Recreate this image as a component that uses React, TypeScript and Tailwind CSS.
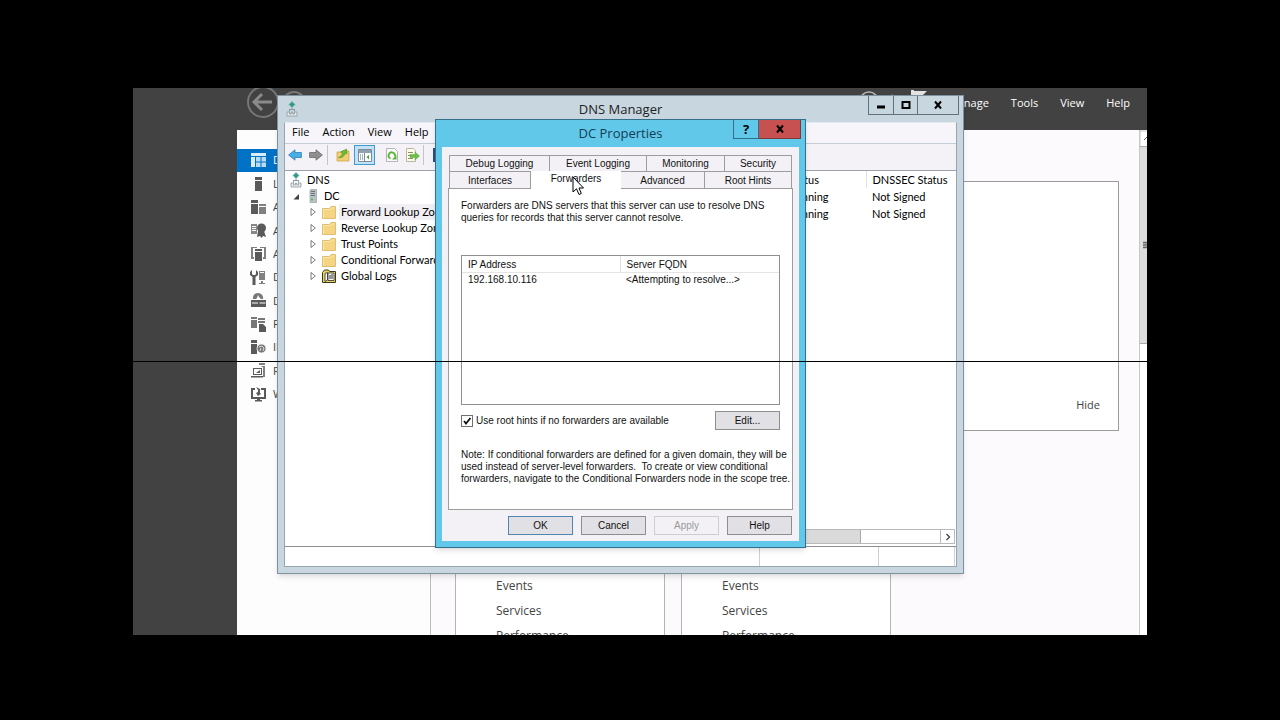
import type { ReactNode } from 'react';

const sidebar = [
  { icon: 'dashboard', label: 'Dashboard' },
  { icon: 'server', label: 'Local Server' },
  { icon: 'servers', label: 'All Servers' },
  { icon: 'cert', label: 'AD CS' },
  { icon: 'directory', label: 'AD DS' },
  { icon: 'dhcp', label: 'DHCP' },
  { icon: 'dns', label: 'DNS' },
  { icon: 'files', label: 'File and Storage Services' },
  { icon: 'iis', label: 'IIS' },
  { icon: 'remote', label: 'Remote Access' },
  { icon: 'wsus', label: 'WSUS' }
];

const tiles = ['Events', 'Services', 'Performance'];

const zones = ['Forward Lookup Zones', 'Reverse Lookup Zones', 'Trust Points', 'Conditional Forwarders'];

const tabsBack = [
  { label: 'Debug Logging', width: 'w-[100px]' },
  { label: 'Event Logging', width: 'w-[97px]' },
  { label: 'Monitoring', width: 'w-[78px]' },
  { label: 'Security', width: 'flex-1' }
];

const tabsFront = [
  { label: 'Interfaces', width: 'w-[82px]' },
  { label: 'Forwarders', width: 'w-[90px]' },
  { label: 'Advanced', width: 'w-[84px]' },
  { label: 'Root Hints', width: 'flex-1' }
];

const glyphs: Record<string, ReactNode> = {
  dashboard: (
    <g fill="#d8ecfa">
      <path d="M1 1h15v3H1zM1 5h4v10H1z" />
      <path d="M6 5h4.500v4.500H6zM11.500 5H16v4.500h-4.500zM6 10.500h4.500V15H6zM11.500 10.500H16V15h-4.500z" opacity=".85" />
    </g>
  ),
  server: <path d="M5 1h7v3H5zM5 5h7v10H5z" />,
  servers: (
    <>
      <path d="M1 1h7v3H1zM1 5h7v10H1z" />
      <path d="M9 5h7v2H9zM9 8h7v7H9z" fill="#808080" />
    </>
  ),
  cert: (
    <>
      <path d="M1 2h6v10H1zM2 4v1h4V4zM2 6v1h4V6zM2 8v1h4V8z" fill="#888" fillRule="evenodd" />
      <path d="M8 9h6l2 6-3-1-1.500 2L10 14l-3 1z" />
      <circle cx="11.500" cy="6" r="4.500" />
    </>
  ),
  directory: (
    <>
      <path d="M5 3h7v2H5zM5 6h7v9H5z" />
      <path d="M1 1h6v1H3v9h1v2H1zM10 1h6v12h-3v-2h1V2h-4z" fill="#808080" />
    </>
  ),
  dhcp: (
    <>
      <path d="M2 1v4l1 1h2l1-1V1l2 2v3L5.500 8v8h-3V8L0 6V3z" />
      <path d="M9 2h6v9H9zM10 3v1h4V3zM11 12h2v2h2v1H9v-1h2z" fill="#808080" fillRule="evenodd" />
    </>
  ),
  dns: (
    <>
      <path d="M8 1a5 5 0 0 1 5 6h-2L9 5 8 3 7 6l-1 1H3a5 5 0 0 1 5-6z" fill="#777" />
      <path d="M1 8h15v7H1zM2 11.500h6v-1H2zM9.500 11.500h6v-1h-6z" fillRule="evenodd" />
    </>
  ),
  files: (
    <>
      <path d="M1 1h6v2H1zM1 4h6v8H1zM8 2h7v2H8zM8 5h7v2H8z" fill="#777" />
      <path d="M9 8h4l3 3v5H9z" />
    </>
  ),
  iis: (
    <>
      <path d="M1 1h6v3H1zM1 5h6v10H1z" />
      <circle cx="11.500" cy="9.500" r="4.500" fill="#777" stroke="#fdfdfd" strokeWidth=".8" />
      <path d="M9 8l3-1 2 2-1 3M10 12l1-3" fill="none" stroke="#ddd" />
    </>
  ),
  remote: (
    <>
      <path d="M9 1h6v2H9zM12 4h3v11h-2V5h-2z" fill="#808080" />
      <path d="M3 6h9v7H3zM4 7v5h7V7zM6 11l4-3v3zM1 14h12v1.500H1z" fillRule="evenodd" />
    </>
  ),
  wsus: (
    <>
      <path d="M1 2h4v2H3v7h11V4h-3V2h5v11h-6v1h2v1.500H5V14h2v-1H1z" />
      <path d="M6 1l4 2v4l1 1-3 2-2-3 2-1V4z" />
    </>
  )
};

function NavIcon({ name }: { name: string }) {
  return (
    <svg viewBox="0 0 17 17" className="size-[17px] shrink-0" fill="#5a5a5a" aria-hidden="true">
      {glyphs[name]}
    </svg>
  );
}

function DnsIcon() {
  return (
    <svg viewBox="0 0 12 16" className="h-4 w-3 shrink-0" aria-hidden="true">
      <path d="M6 .5L9 3.500 6 6.500 3 3.500z" fill="#2f9a86" stroke="#6fb5a6" strokeWidth=".6" />
      <path d="M6 6.500v2M3.500 8.500h5M3.500 8v2.500M8.500 8v2.500" stroke="#8b999f" fill="none" />
      <path d="M1 15v-4h2.500v2h1.800v-2h1.500v2h1.700v-2H11v4z" fill="#e6ebed" stroke="#8c989e" strokeWidth=".8" />
    </svg>
  );
}

function ServerIcon() {
  return (
    <svg viewBox="0 0 8 14" className="h-3.5 w-2 shrink-0" aria-hidden="true">
      <path d="M1 1l1-.5h5.500v13L1 13.500z" fill="#b9c3c6" stroke="#8b9599" strokeWidth=".6" />
      <path d="M2 2.500h4M2 4.500h4M2 6.500h4" stroke="#65737a" />
      <path d="M2 10.500h2" stroke="#58b04a" strokeWidth="1.500" />
    </svg>
  );
}

function FolderIcon() {
  return (
    <svg viewBox="0 0 14 13" className="h-[13px] w-3.5 shrink-0" aria-hidden="true">
      <path d="M.5 12.500v-10h7l1.500-2h4.500v12z" fill="#f3d584" stroke="#d9b35c" strokeWidth=".8" />
      <path d="M1.500 11.500v-8h7l1-1.500h3" fill="none" stroke="#fae7ae" />
    </svg>
  );
}

function LogsIcon() {
  return (
    <svg viewBox="0 0 14 14" className="size-3.5 shrink-0" aria-hidden="true">
      <path d="M.5 3.500l2-2.500h4l1 1.500h6v11H.5z" fill="#e9d75c" stroke="#3c3a1c" />
      <path d="M3 4.500l2.500-1v7.500L3 12.500zM6 4h6v7.500H6z" fill="#fff" stroke="#2b2b2b" strokeWidth=".8" />
      <path d="M8 6v4M10 5v5" stroke="#2b2b2b" />
    </svg>
  );
}

function Expander({ open }: { open?: boolean }) {
  return (
    <svg viewBox="0 0 6 8" className="h-2 w-1.5 shrink-0" aria-hidden="true">
      {open ? <path d="M6 2v5.500H.5z" fill="#404040" /> : <path d="M1 .5v7L5.300 4z" fill="#fff" stroke="#6a6a6a" strokeWidth=".9" />}
    </svg>
  );
}

function ArrowIcon({ back }: { back?: boolean }) {
  return (
    <svg viewBox="0 0 14 12" className="h-3 w-3.5" aria-hidden="true">
      {back ? (
        <path d="M.6 6L7 .8v2.700h6.400v5H7v2.700z" fill="#49aee6" stroke="#2c7fb8" strokeWidth=".8" />
      ) : (
        <path d="M13.400 6L7 .8v2.700H.6v5H7v2.700z" fill="#8f8f8f" stroke="#6b6b6b" strokeWidth=".8" />
      )}
    </svg>
  );
}

function Toolbar() {
  return (
    <div className="flex h-[27px] items-center border-b border-[#9aa3ab] bg-[#f4f2f7] pb-1 pl-[3px]">
      <button aria-label="Back"><ArrowIcon back /></button>
      <button aria-label="Forward" className="ml-[7px]"><ArrowIcon /></button>
      <span className="mx-1 h-5 w-px bg-[#c4c4c8]" />
      <button aria-label="Up one level" className="ml-1">
        <svg viewBox="0 0 14 14" className="size-3.5">
          <path d="M1 13V4h4l1-1h7v10z" fill="#f1cf70" stroke="#cfa64d" strokeWidth=".8" />
          <path d="M2.500 9.500C5 9 6 7 6.500 5L4.500 4l6-3 .5 5-1.700-1C8.500 8 6 10.500 2.500 9.500z" fill="#6dbb37" stroke="#3f8a1c" strokeWidth=".5" />
        </svg>
      </button>
      <button aria-label="Show console tree" className="ml-1 flex h-5 w-[21px] items-center justify-center border border-[#3c9bd0] bg-[#c4e2f3]">
        <svg viewBox="0 0 14 13" className="h-[13px] w-3.5">
          <path d="M.5.5h13v12H.5z" fill="#fff" stroke="#7d8c98" />
          <path d="M1 1h12v3H1z" fill="#8fa2b0" />
          <path d="M6.500 4v8" stroke="#7d8c98" />
          <path d="M2 6h1M4 6h1M2 8h1M4 8h1M2 10h1M4 10h1" stroke="#4d6f8c" />
          <path d="M11 6v4.500L8.500 8z" fill="#3fa535" />
        </svg>
      </button>
      <button aria-label="Refresh" className="ml-2.5">
        <svg viewBox="0 0 14 14" className="size-3.5">
          <path d="M1.500.5h8l3 3v10h-11z" fill="#fafafa" stroke="#a5a5a5" strokeWidth=".8" />
          <path d="M5.500 10.500a3.200 3.200 0 1 1 4.300-2" fill="none" stroke="#5cb53b" strokeWidth="1.800" />
          <path d="M11.500 7v4.500H7z" fill="#5cb53b" />
        </svg>
      </button>
      <button aria-label="Export list" className="ml-1.5">
        <svg viewBox="0 0 15 14" className="h-3.5 w-[15px]">
          <path d="M1.500.5h7l2 2v11h-9z" fill="#fdfbe8" stroke="#a9a590" strokeWidth=".8" />
          <path d="M3 4.500h5M3 7.500h2M3 10.500h5" stroke="#8d8d6c" />
          <path d="M5 6.500h5V4l4.500 4L10 12V9.500H5z" fill="#6cc04a" stroke="#4a9a2d" strokeWidth=".4" />
        </svg>
      </button>
      <span className="mx-[3px] h-5 w-px bg-[#c4c4c8]" />
      <span className="ml-1.5 h-3.5 w-3.5 bg-[#2d4f80]" />
    </div>
  );
}

function ServerManager() {
  return (
    <div className="flex h-full flex-col bg-[#424242]">
      <header className="relative flex h-[42px] shrink-0 justify-end overflow-hidden pr-[17px] text-white">
        <svg viewBox="0 0 80 42" className="absolute left-[104px] top-0 h-[42px] w-20" fill="none" stroke="#777" aria-hidden="true">
          <circle cx="26" cy="14" r="15" strokeWidth="2" />
          <path d="M35 14H18M25 6l-8 8 8 8" stroke="#8a8a8a" strokeWidth="3" />
          <circle cx="57" cy="15" r="11" strokeWidth="2" />
        </svg>
        <svg viewBox="0 0 80 20" className="absolute right-[210px] top-0 h-5 w-20" aria-hidden="true">
          <circle cx="12" cy="13" r="9" fill="none" stroke="#b5b5b5" strokeWidth="1.500" />
          <path d="M35 6v3" stroke="#777" />
          <path d="M54 2h3v1h13l-4 4 1 5H54z" fill="#e3e3e3" />
        </svg>
        <nav className="flex gap-[22px] pt-[7px] leading-4">
          <a href="#manage">Manage</a>
          <a href="#tools">Tools</a>
          <a href="#view">View</a>
          <a href="#help">Help</a>
        </nav>
      </header>
      <div className="ml-[104px] flex min-h-0 flex-1 overflow-hidden bg-[#fcfafd]">
        <nav className="w-[194px] shrink-0 border-r border-[#bdbdbd] bg-[#fdfdfd] pt-[19px] text-[#444]">
          <div className="flex h-[257px] flex-col">
            {sidebar.map((s, i) => (
              <a key={s.label} href="#" className={i === 0 ? 'flex flex-1 items-center gap-1.5 bg-[#0072c6] pl-[13px] text-white' : 'flex flex-1 items-center gap-1.5 pl-[13px]'}>
                <NavIcon name={s.icon} />
                <span className="truncate">{s.label}</span>
              </a>
            ))}
          </div>
        </nav>
        <main className="flex flex-1 flex-col pl-6 pr-5 pt-[51px] text-[#444]">
          <section className="flex h-[250px] shrink-0 items-end justify-end border border-[#9c9c9c] bg-white px-[18px] pb-[17px]">
            <button className="leading-4">Hide</button>
          </section>
          <div className="mt-6 flex flex-1 gap-4">
            {[0, 1].map(n => (
              <section key={n} className="w-[210px] border border-[#b4b4b4] bg-white pl-10 pt-[117px] text-xs">
                {tiles.map(t => (
                  <p key={t} className="h-[25px] leading-[25px]">{t}</p>
                ))}
              </section>
            ))}
          </div>
        </main>
        <div className="flex w-2 shrink-0 flex-col border-l border-[#c8c8c8] bg-white">
          <svg viewBox="0 0 8 16" className="h-4 w-2" aria-hidden="true">
            <path d="M0 0v16M0 1h8" stroke="#c8c8c8" />
            <path d="M4 10l4-4" stroke="#555" fill="none" />
          </svg>
          <div className="flex h-[198px] items-center border-y border-[#a8a8a8] bg-[#dcdcdc] pl-[3px]">
            <svg viewBox="0 0 5 8" className="h-2 w-[5px]" aria-hidden="true">
              <path d="M0 1h5M0 4h5M0 7h5" stroke="#666" strokeWidth="2" />
            </svg>
          </div>
        </div>
      </div>
    </div>
  );
}

function WindowButtons() {
  return (
    <div className="absolute right-1 top-0 flex h-[19px] border border-t-0 border-[#5f7280]">
      <button aria-label="Minimize" className="flex w-[25px] items-center justify-center border-r border-[#5f7280]">
        <svg viewBox="0 0 10 10" className="size-2.5"><path d="M1 7h8" stroke="#000" strokeWidth="3" /></svg>
      </button>
      <button aria-label="Maximize" className="flex w-6 items-center justify-center border-r border-[#5f7280]">
        <svg viewBox="0 0 10 10" className="size-2.5"><path d="M1.500 2h7v6h-7z" fill="none" stroke="#000" strokeWidth="2" /></svg>
      </button>
      <button aria-label="Close" className="flex w-10 items-center justify-center">
        <svg viewBox="0 0 10 10" className="size-2.5"><path d="M2 1.500l6 7M8 1.500l-6 7" stroke="#000" strokeWidth="2" /></svg>
      </button>
    </div>
  );
}

function DnsManager({ children }: { children: ReactNode }) {
  return (
    <div className="absolute left-36 right-[183px] top-[7px] border border-[#7f929f] bg-[#c7d6df] px-1.5 pb-1.5 text-black shadow-md">
      <div className="flex h-[26px] items-center">
        <span className="flex w-[14px] justify-end"><DnsIcon /></span>
        <h1 className="flex-1 pr-[14px] text-center text-[13px] leading-4 text-[#222]">DNS Manager</h1>
        <WindowButtons />
      </div>
      <div className="border border-[#97a5af] border-t-[#e4eaee] bg-white">
        <nav className="flex h-[21px] items-center gap-[13px] border-b border-[#c3cdd5] bg-[#f7f5fa] pb-px pl-[7px]">
          <button>File</button>
          <button>Action</button>
          <button>View</button>
          <button>Help</button>
        </nav>
        <Toolbar />
        <div className="flex h-[376px] border-b border-[#8d8d8d] font-['Lato','Open_Sans',sans-serif]">
          <ul className="w-44 shrink-0 overflow-hidden whitespace-nowrap pt-px leading-4">
            <li className="flex h-4 items-center gap-[5px] pl-[5px]"><DnsIcon />DNS</li>
            <li className="flex h-4 items-center pl-2">
              <Expander open />
              <span className="ml-2.5 mr-[7px] flex"><ServerIcon /></span>DC
            </li>
            {zones.map((z, i) => (
              <li key={z} className="flex h-4 items-center pl-[25px]">
                <Expander />
                <span className="ml-1.5 mr-[3px] flex"><FolderIcon /></span>
                <span className={i === 0 ? 'flex-1 bg-[#f1eff3] pl-0.5' : 'pl-0.5'}>{z}</span>
              </li>
            ))}
            <li className="flex h-4 items-center pl-[25px]">
              <Expander />
              <span className="ml-1.5 mr-[5px] flex"><LogsIcon /></span>Global Logs
            </li>
          </ul>
          <div className="flex flex-1 flex-col border-l border-[#a0a0a0]">
            <table className="w-full table-fixed border-collapse text-left leading-4">
              <thead>
                <tr className="h-[17px]">
                  <th className="font-normal" />
                  <th className="w-[83px] border-r border-[#e2e2e2] px-1.5 font-normal">Status</th>
                  <th className="w-[90px] px-1.5 font-normal">DNSSEC Status</th>
                </tr>
              </thead>
              <tbody>
                {[0, 1].map(n => (
                  <tr key={n} className="h-[17px]">
                    <td />
                    <td className="px-1.5">Running</td>
                    <td className="px-1.5">Not Signed</td>
                  </tr>
                ))}
              </tbody>
            </table>
            <div className="mb-0.5 mr-px mt-auto flex h-[15px] border border-[#b9b9b9]">
              <div className="flex-1 border-r border-[#a8a8a8] bg-[#dadada]" />
              <div className="w-[79px]" />
              <button aria-label="Scroll right" className="flex w-3.5 items-center justify-center border-l border-[#b9b9b9]">
                <svg viewBox="0 0 8 8" className="size-2"><path d="M2.500 1l3 3-3 3" fill="none" stroke="#444" strokeWidth="1.300" /></svg>
              </button>
            </div>
          </div>
        </div>
        <div className="flex h-[19px] justify-end pr-px">
          <span className="w-[119px] border-l border-[#d0d0d0]" />
          <span className="w-[77px] border-x border-[#d0d0d0]" />
        </div>
      </div>
      {children}
    </div>
  );
}

function PushButton({ children, primary, disabled }: { children: ReactNode; primary?: boolean; disabled?: boolean }) {
  const tone = disabled ? 'border-[#cfcdd2] bg-[#f3f1f5] text-[#9a9a9a]' : primary ? 'border-[#4f86b0] bg-[#e1e0e4]' : 'border-[#8e8e8e] bg-[#e1e0e4]';
  return (
    <button disabled={disabled} className={`h-[19px] w-[65px] border leading-4 ${tone}`}>
      {children}
    </button>
  );
}

function PropertiesDialog() {
  return (
    <div role="dialog" aria-label="DC Properties" className="absolute inset-x-0 top-[23px] mx-auto w-[371px] border border-[#33708a] bg-[#62c8ea] px-1.5 pb-1.5 shadow-md">
      <h2 className="h-[27px] text-center text-[13px] leading-[26px] text-[#123d55]">DC Properties</h2>
      <div className="absolute right-1 top-0 flex h-[19px]">
        <button aria-label="Help" className="w-[26px] border border-t-0 border-[#2f6f8c] text-[13px] font-bold leading-4">?</button>
        <button aria-label="Close" className="flex w-[42px] items-center justify-center border border-l-0 border-t-0 border-[#7c3b3b] bg-[#c75050]">
          <svg viewBox="0 0 10 10" className="size-2.5"><path d="M2 1.500l6 7M8 1.500l-6 7" stroke="#000" strokeWidth="2" /></svg>
        </button>
      </div>
      <div className="bg-[#f3f1f6] px-1.5 pb-1.5 pt-2 font-['Liberation_Sans',Arial,sans-serif] text-[10px] leading-3 text-[#111]">
        <div role="tablist" className="px-px">
          <div className="flex h-4 border-l border-t border-[#9d9d9d]">
            {tabsBack.map(t => (
              <button key={t.label} role="tab" className={`${t.width} border-r border-[#9d9d9d] pt-px`}>{t.label}</button>
            ))}
          </div>
          <div className="flex h-[17px]">
            {tabsFront.map((t, i) =>
              i === 1 ? (
                <button key={t.label} role="tab" aria-selected="true" className={`${t.width} z-10 -mb-px bg-white pb-0.5`}>{t.label}</button>
              ) : (
                <button key={t.label} role="tab" className={`${t.width} border-r border-t border-[#9d9d9d] pt-px first:border-l`}>{t.label}</button>
              )
            )}
          </div>
        </div>
        <div role="tabpanel" className="h-[322px] border border-[#9d9d9d] bg-white px-3 pt-[11px]">
          <p>
            Forwarders are DNS servers that this server can use to resolve DNS
            <br />
            queries for records that this server cannot resolve.
          </p>
          <div className="mt-[31px] h-[150px] border border-[#8f8f8f]">
            <table className="w-full table-fixed border-collapse text-left">
              <thead>
                <tr className="h-4 border-b border-[#e4e4e4]">
                  <th className="w-[158px] border-r border-[#e0e0e0] px-1.5 pb-0 pt-0.5 font-normal">IP Address</th>
                  <th className="px-1.5 pb-0 pt-0.5 font-normal">Server FQDN</th>
                </tr>
              </thead>
              <tbody>
                <tr className="h-4">
                  <td className="px-1.5">192.168.10.116</td>
                  <td className="px-1.5">&lt;Attempting to resolve...&gt;</td>
                </tr>
              </tbody>
            </table>
          </div>
          <div className="mt-1.5 flex items-center justify-between">
            <label className="flex items-center gap-[3px]">
              <span className="relative flex">
                <input type="checkbox" defaultChecked className="peer size-3 appearance-none border border-[#707070] bg-white" />
                <svg viewBox="0 0 12 12" className="pointer-events-none absolute inset-0 hidden size-3 peer-checked:block" aria-hidden="true">
                  <path d="M3 6l2 2.500L9.500 3" fill="none" stroke="#111" strokeWidth="1.800" />
                </svg>
              </span>
              Use root hints if no forwarders are available
            </label>
            <PushButton>Edit...</PushButton>
          </div>
          <p className="mt-[19px] whitespace-pre">
            {'Note: If conditional forwarders are defined for a given domain, they will be\nused instead of server-level forwarders.  To create or view conditional\nforwarders, navigate to the Conditional Forwarders node in the scope tree.'}
          </p>
        </div>
        <div className="mt-1.5 flex justify-end gap-2 px-px">
          <PushButton primary>OK</PushButton>
          <PushButton>Cancel</PushButton>
          <PushButton disabled>Apply</PushButton>
          <PushButton>Help</PushButton>
        </div>
      </div>
      <svg viewBox="0 0 12 20" className="absolute left-[136px] top-14 z-20 h-5 w-3" aria-hidden="true">
        <path d="M1 1v15l3.500-3.200L7 18.500l2.300-1L7 12h4.500z" fill="#fff" stroke="#000" />
      </svg>
    </div>
  );
}

export default function App() {
  return (
    <div className="flex h-screen flex-col bg-black px-[133px] pb-[85px] pt-[88px] font-['Open_Sans','Noto_Sans',sans-serif] text-[11px]">
      <div className="relative min-h-0 flex-1 overflow-hidden">
        <ServerManager />
        <DnsManager>
          <PropertiesDialog />
        </DnsManager>
        <div className="absolute inset-x-0 top-[273px] z-30 h-px bg-black" />
      </div>
    </div>
  );
}
